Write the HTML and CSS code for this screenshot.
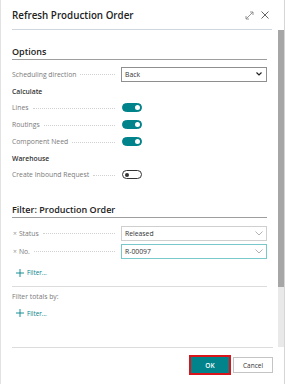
FILE: index.html
```html
<!DOCTYPE html>
<html lang="en">
<head>
    <meta charset="UTF-8">
    <meta name="viewport" content="width=device-width, initial-scale=1.0">
    <title>Refresh Production Order</title>
    <link rel="stylesheet" href="styles.css">
</head>
<body>

<div class="dialog">
    <header class="dialog-header">
        <h1>Refresh Production Order</h1>
        <div class="header-icons">
            <svg width="9" height="9" viewBox="0 0 9 9" fill="none" stroke="#8a8a8a" stroke-width="0.9">
                <path d="M1 8 L8 1 M5 1 H8 V4 M1 5 V8 H4"/>
            </svg>
            <svg width="8" height="8" viewBox="0 0 8 8" fill="none" stroke="#666" stroke-width="1">
                <path d="M0.5 0.5 L7.5 7.5 M7.5 0.5 L0.5 7.5"/>
            </svg>
        </div>
    </header>

    <div class="dialog-body">
        <main class="content">
            <h2 class="section-title first">Options</h2>

            <div class="row field">
                <span class="label">Scheduling direction</span>
                <div class="select">
                    <span>Back</span>
                    <svg width="6" height="4" viewBox="0 0 6 4" fill="none" stroke="#222" stroke-width="1.2">
                        <path d="M0.5 0.5 L3 3 L5.5 0.5"/>
                    </svg>
                </div>
            </div>

            <div class="row group">Calculate</div>

            <div class="row">
                <span class="label">Lines</span>
                <span class="toggle on"></span>
            </div>
            <div class="row">
                <span class="label">Routings</span>
                <span class="toggle on"></span>
            </div>
            <div class="row">
                <span class="label">Component Need</span>
                <span class="toggle on"></span>
            </div>

            <div class="row group">Warehouse</div>

            <div class="row">
                <span class="label">Create Inbound Request</span>
                <span class="toggle"></span>
            </div>

            <h2 class="section-title filter-title">Filter: Production Order</h2>

            <div class="row field">
                <span class="label"><span class="remove">×</span>Status</span>
                <div class="input">
                    <span>Released</span>
                    <svg width="8" height="5" viewBox="0 0 8 5" fill="none" stroke="#a0a0a0" stroke-width="0.8">
                        <path d="M0.5 0.5 L4 4 L7.5 0.5"/>
                    </svg>
                </div>
            </div>
            <div class="row field">
                <span class="label"><span class="remove">×</span>No.</span>
                <div class="input focused">
                    <span>R-00097</span>
                    <svg width="8" height="5" viewBox="0 0 8 5" fill="none" stroke="#a0a0a0" stroke-width="0.8">
                        <path d="M0.5 0.5 L4 4 L7.5 0.5"/>
                    </svg>
                </div>
            </div>

            <div class="row add-filter">
                <svg class="plus" width="8" height="8" viewBox="0 0 8 8" fill="none" stroke="#00838a" stroke-width="0.9">
                    <path d="M4 0 V8 M0 4 H8"/>
                </svg>
                Filter...
            </div>

            <div class="divider"></div>

            <div class="row totals">Filter totals by:</div>

            <div class="row add-filter second">
                <svg class="plus" width="8" height="8" viewBox="0 0 8 8" fill="none" stroke="#00838a" stroke-width="0.9">
                    <path d="M4 0 V8 M0 4 H8"/>
                </svg>
                Filter...
            </div>
        </main>

        <div class="scrollbar">
            <div class="thumb"></div>
        </div>
    </div>

    <footer class="dialog-footer">
        <button class="btn primary">OK</button>
        <button class="btn">Cancel</button>
    </footer>
</div>

</body>
</html>
```

FILE: styles.css
```css
body {
    margin: 0;
    padding: 0;
    background-color: #ffffff;
    font-family: "Open Sans", "Noto Sans", sans-serif;
    color: #212121;
}

.dialog {
    width: 285px;
    height: 384px;
    display: flex;
    flex-direction: column;
    border-left: 1px solid #e2e2e2;
    border-right: 1px solid #d6d6d6;
    box-sizing: border-box;
}

.dialog-header {
    height: 30px;
    flex-shrink: 0;
    margin: 0 12px 0 11px;
    display: flex;
    align-items: center;
    justify-content: space-between;
    border-bottom: 1px solid #cfd6dd;
    box-sizing: border-box;
}

.dialog-header h1 {
    margin: 0;
    font-size: 9.8px;
    font-weight: 600;
    color: #222;
    padding-top: 1px;
}

.header-icons {
    display: flex;
    align-items: center;
    gap: 7px;
    margin-right: 3px;
    padding-top: 1px;
}

.dialog-body {
    flex: 1;
    display: flex;
    min-height: 0;
}

.content {
    flex: 1;
    padding: 0 11px 0 11px;
    font-size: 6.8px;
}

.section-title {
    margin: 0;
    height: 15px;
    line-height: 15px;
    font-size: 9px;
    font-weight: 600;
    color: #222;
    border-bottom: 1px solid #9e9e9e;
}

.section-title.first {
    margin-top: 14px;
    margin-bottom: 5px;
}

.section-title.filter-title {
    margin-top: 19px;
    margin-bottom: 6px;
}

.row {
    height: 17px;
    display: flex;
    align-items: center;
}

.row.field {
    height: 18px;
}

.row.group {
    height: 16px;
    font-weight: 600;
    color: #333;
}

.label {
    width: 109px;
    flex-shrink: 0;
    display: flex;
    align-items: center;
    color: #7a7a7a;
    white-space: nowrap;
}

.label::after {
    content: "";
    flex: 1;
    margin: 1px 6px 0 4px;
    border-bottom: 1px dotted #d0d0d0;
    height: 0;
}

.remove {
    margin: 0 2px 0 1px;
    color: #9a9a9a;
}

.select,
.input {
    flex: 1;
    height: 15px;
    box-sizing: border-box;
    display: flex;
    align-items: center;
    justify-content: space-between;
    padding: 0 4px 0 3px;
    color: #333;
}

.select {
    border: 1px solid #8f8f8f;
}

.input {
    border: 1px solid #cfcfcf;
    padding-right: 3px;
}

.input.focused {
    border-color: #79c9cc;
}

.toggle {
    width: 20px;
    height: 9px;
    margin-left: 1px;
    border-radius: 5px;
    border: 1px solid #333;
    box-sizing: border-box;
    position: relative;
    background-color: #fff;
}

.toggle::after {
    content: "";
    position: absolute;
    left: 2px;
    top: 1.5px;
    width: 4px;
    height: 4px;
    border-radius: 50%;
    background-color: #333;
}

.toggle.on {
    background-color: #00838a;
    border-color: #00838a;
}

.toggle.on::after {
    left: auto;
    right: 1.5px;
    top: 1px;
    width: 5px;
    height: 5px;
    background-color: #fff;
}

.add-filter {
    margin-top: 4px;
    padding-left: 4px;
    color: #00838a;
    font-size: 6.3px;
}

.add-filter.second {
    margin-top: 0;
    height: 16px;
}

.plus {
    margin-right: 3px;
}

.divider {
    margin-top: 5px;
    border-top: 1px solid #dcdcdc;
}

.totals {
    height: 18px;
    color: #7a7a7a;
}

.scrollbar {
    width: 6px;
    display: flex;
    flex-direction: column;
    background-color: #e9e9e9;
}

.thumb {
    height: 257px;
    background-color: #a6a6a6;
}

.dialog-footer {
    flex: 0 0 37px;
    margin: 0 11px;
    border-top: 1px solid #dcdcdc;
    box-sizing: border-box;
    display: flex;
    justify-content: flex-end;
    align-items: flex-start;
    padding-top: 9px;
    gap: 4px;
}

.btn {
    height: 16px;
    width: 40px;
    padding: 0;
    font-family: "Open Sans", "Noto Sans", sans-serif;
    font-size: 6.5px;
    color: #333;
    background-color: #fff;
    border: 1px solid #c4c4c4;
    cursor: pointer;
}

.btn.primary {
    width: 38px;
    color: #fff;
    font-weight: 600;
    background-color: #00838a;
    border-color: #00838a;
    outline: 2px solid #d9141b;
}
```
